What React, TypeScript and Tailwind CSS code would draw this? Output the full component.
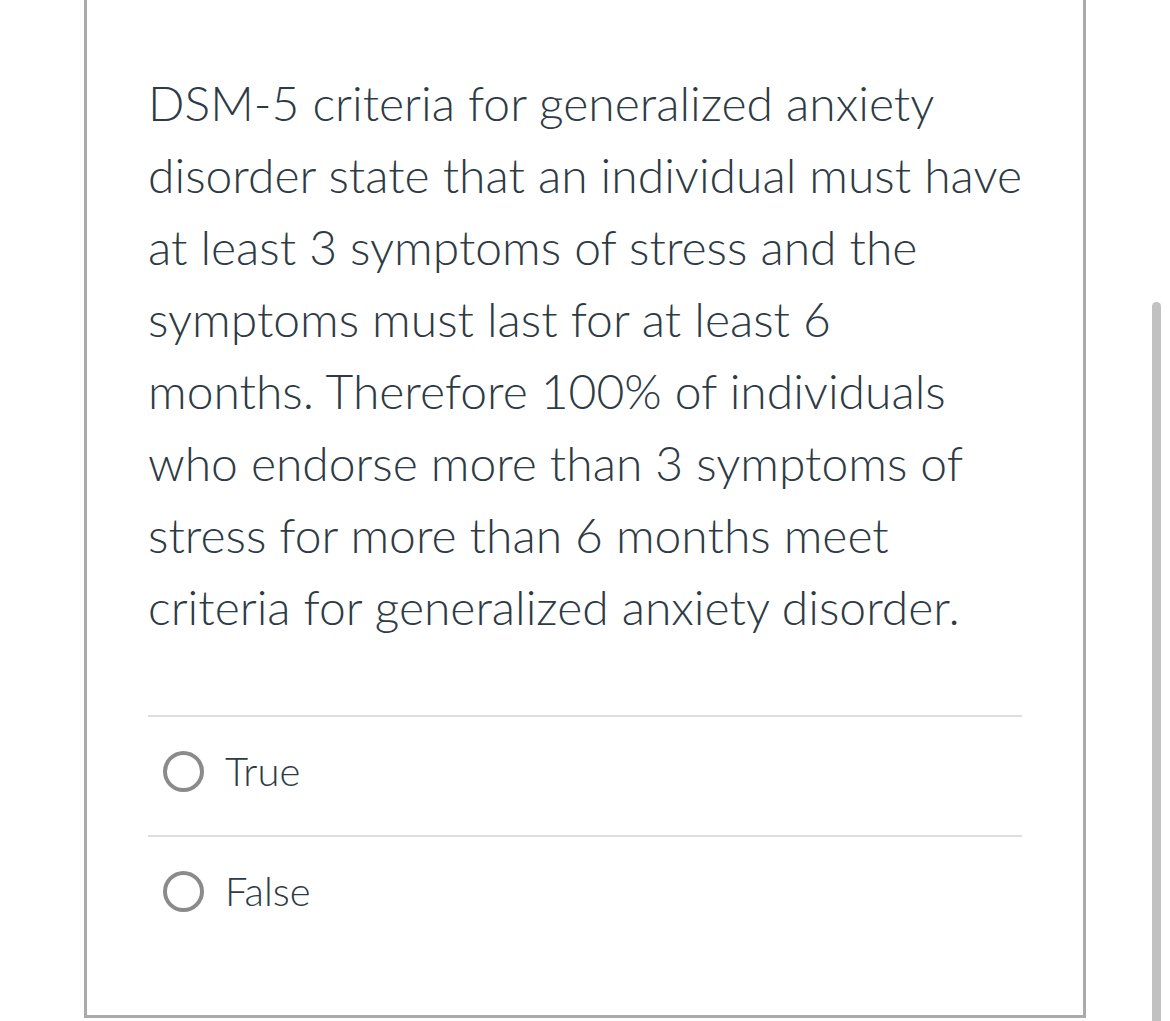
import React from 'react';

// line breaks as they fall in the screenshot
const questionLines = [
  'DSM-5 criteria for generalized anxiety',
  'disorder state that an individual must have',
  'at least 3 symptoms of stress and the',
  'symptoms must last for at least 6',
  'months. Therefore 100% of individuals',
  'who endorse more than 3 symptoms of',
  'stress for more than 6 months meet',
  'criteria for generalized anxiety disorder.',
];

const options = ['True', 'False'];

export default function App() {
  return (
    <div className="relative h-[1021px] w-[1170px] overflow-hidden bg-white font-['Lato','Liberation_Sans',sans-serif] text-[#2d3b45]">
      {/* card */}
      <div className="ml-[84px] w-[1002px] border-x-[3px] border-b-[3px] border-[#aaaaaa] bg-white pl-[61px] pr-[61px] pt-[67px] pb-[60px]">
        <p className="text-[48px] font-light leading-[72px]">
          {questionLines.map((line) => (
            <span key={line} className="block whitespace-nowrap">
              {line}
            </span>
          ))}
        </p>

        <div className="mt-[72px]">
          {options.map((opt) => (
            <div key={opt} className="border-t-2 border-[#dddddd]">
              <label className="flex h-[118px] items-center gap-[21px] pl-[15px] pb-[10px]">
                <span className="h-[41px] w-[41px] rounded-full border-[4px] border-[#8b8b8d]" />
                <span className="text-[40px] font-light leading-none">{opt}</span>
              </label>
            </div>
          ))}
        </div>
      </div>

      {/* scrollbar thumb */}
      <div className="absolute left-[1152px] top-[302px] h-[760px] w-[9px] rounded-full bg-[#c1c1c1]" />
    </div>
  );
}
